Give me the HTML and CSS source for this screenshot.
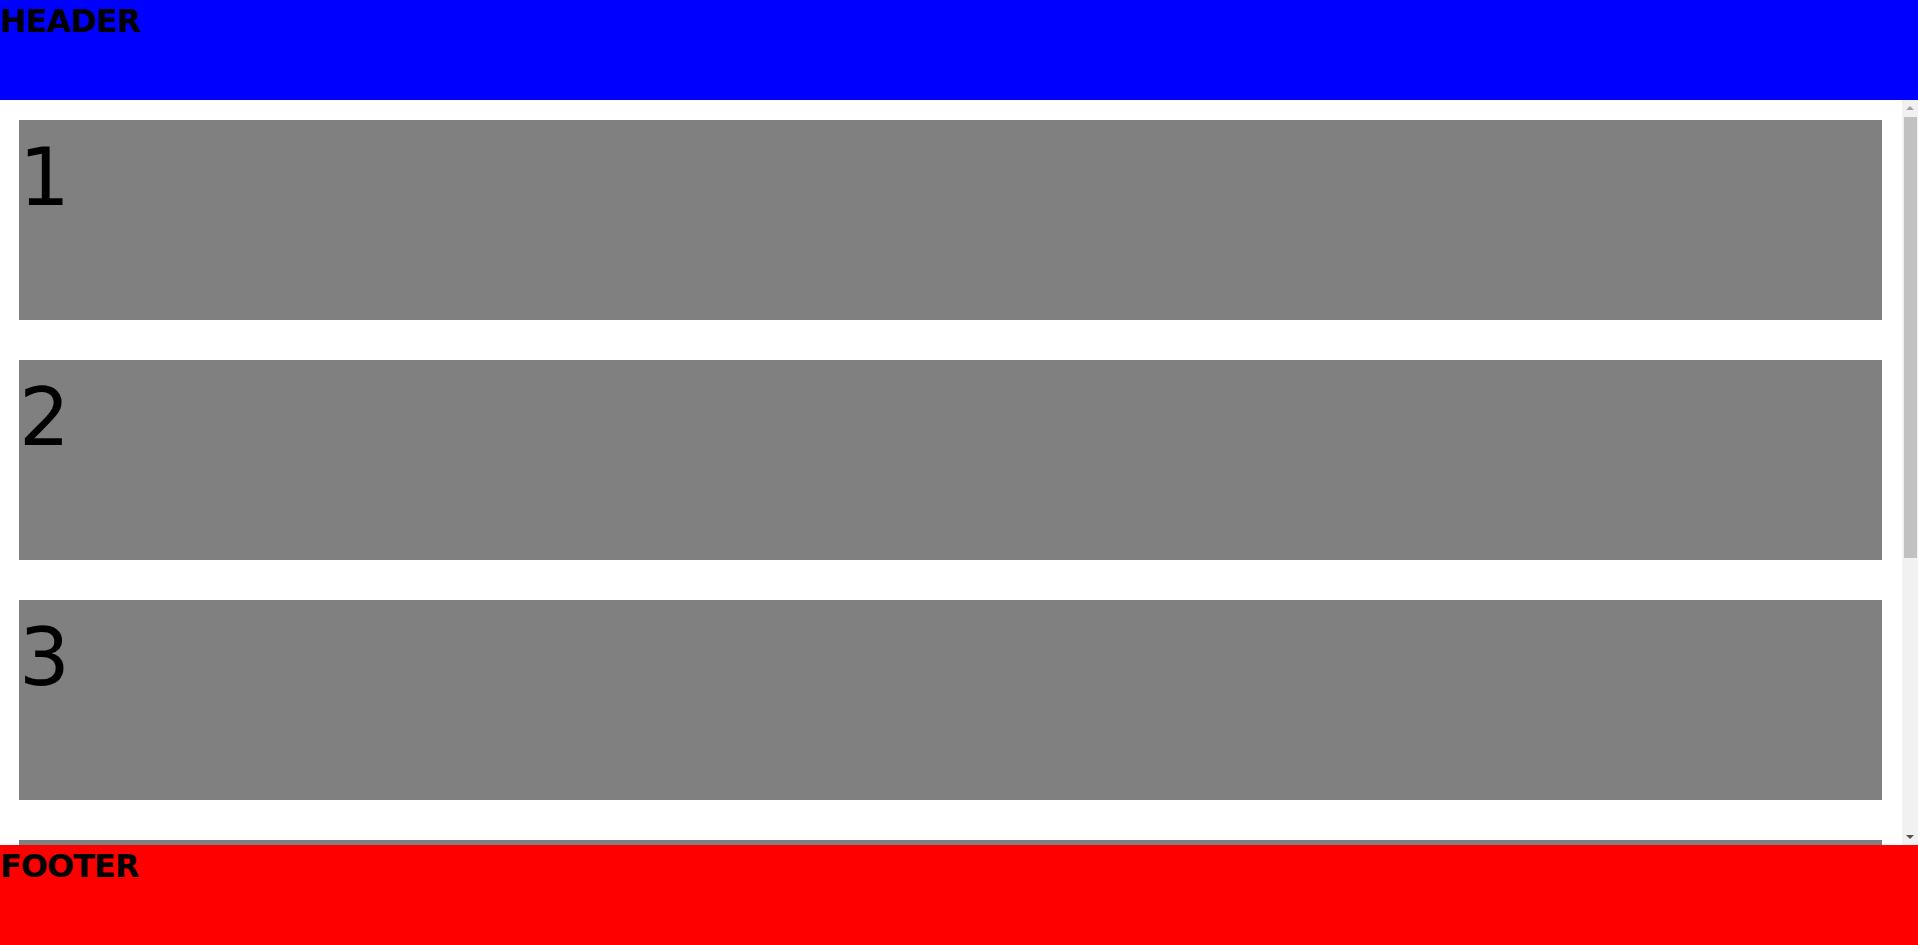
FILE: index.html
```html
<!DOCTYPE html>
<html>
<head>
<meta charset="utf-8">
<title>Layout</title>
<link rel="stylesheet" href="styles.css">
</head>
<body>
<div class="page">
  <header class="header"><h1 class="title">HEADER</h1></header>
  <div class="viewport">
    <main class="content">
      <div class="item">1</div>
      <div class="item">2</div>
      <div class="item">3</div>
      <div class="item">4</div>
      <div class="item">5</div>
    </main>
    <div class="scrollbar" aria-hidden="true">
      <div class="sb-button"><span class="arrow-up"></span></div>
      <div class="sb-track"><div class="sb-thumb"></div></div>
      <div class="sb-button"><span class="arrow-down"></span></div>
    </div>
  </div>
  <footer class="footer"><h1 class="title">FOOTER</h1></footer>
</div>
</body>
</html>
```

FILE: styles.css
```css
html, body {
  margin: 0;
  padding: 0;
  height: 100%;
  overflow: hidden;
}
body {
  font-family: "DejaVu Sans", Verdana, sans-serif;
  color: #000;
  background: #fff;
}
.page {
  display: flex;
  flex-direction: column;
  height: 100vh;
}
.header {
  flex: 0 0 100px;
  background: #0000ff;
}
.footer {
  flex: 0 0 100px;
  background: #ff0000;
}
.title {
  margin: 0;
  padding-top: 3px;
  font-size: 32px;
  font-weight: bold;
  letter-spacing: -1px;
  line-height: 1.164;
}
.viewport {
  flex: 1 1 auto;
  min-height: 0;
  display: flex;
}
.content {
  flex: 1 1 auto;
  min-width: 0;
  overflow: hidden;
  display: flex;
  flex-direction: column;
  gap: 40px;
  padding: 20px 20px 20px 19px;
}
.item {
  flex: 0 0 200px;
  background: #808080;
  font-size: 80px;
  letter-spacing: -2px;
  line-height: 1.164;
  padding-top: 11px;
  box-sizing: border-box;
}
.scrollbar {
  flex: 0 0 16px;
  display: flex;
  flex-direction: column;
  background: #f1f1f1;
}
.sb-button {
  flex: 0 0 16px;
  display: flex;
  align-items: center;
  justify-content: center;
}
.arrow-up {
  width: 0;
  height: 0;
  border-left: 4px solid transparent;
  border-right: 4px solid transparent;
  border-bottom: 4px solid #a3a3a3;
}
.arrow-down {
  width: 0;
  height: 0;
  border-left: 4px solid transparent;
  border-right: 4px solid transparent;
  border-top: 4px solid #505050;
}
.sb-track {
  flex: 1 1 auto;
  padding: 1px 1px 0 2px;
}
.sb-thumb {
  height: 441px;
  background: #c1c1c1;
}
```
